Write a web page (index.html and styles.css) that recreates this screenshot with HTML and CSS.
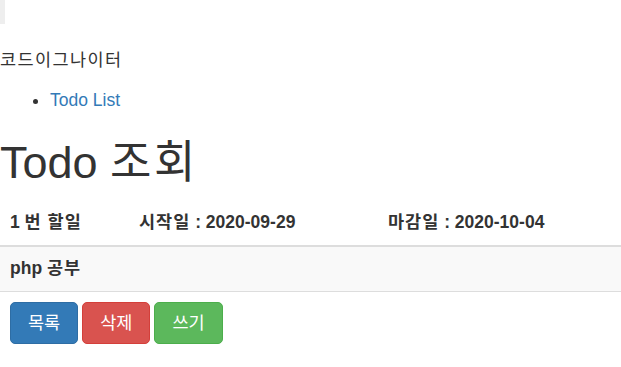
FILE: index.html
```html
<!DOCTYPE html>
<html lang="ko">
<head>
<meta charset="utf-8">
<title>Todo 조회</title>
<link rel="stylesheet" href="styles.css">
</head>
<body>
<div class="topbox"></div>
<div class="brand"><span class="ko">코드이그나이터</span></div>
<ul class="nav-list">
  <li><a href="#">Todo List</a></li>
</ul>
<h1 class="title">Todo <span class="ko-lg">조회</span></h1>
<table class="table">
  <thead>
    <tr>
      <th class="c1">1 <span class="ko-b">번 할일</span></th>
      <th class="c2"><span class="ko-b">시작일</span> : 2020-09-29</th>
      <th class="c3"><span class="ko-b">마감일</span> : 2020-10-04</th>
    </tr>
  </thead>
  <tbody>
    <tr class="striped">
      <th colspan="3">php <span class="ko-b">공부</span></th>
    </tr>
  </tbody>
</table>
<div class="actions">
  <a href="#" class="btn btn-primary">목록</a>
  <a href="#" class="btn btn-danger">삭제</a>
  <a href="#" class="btn btn-success">쓰기</a>
</div>
</body>
</html>
```
FILE: styles.css
```css
html, body {
  margin: 0;
  padding: 0;
  background: #fff;
}
body {
  font-family: "Liberation Sans", Arial, "Noto Sans CJK KR", sans-serif;
  font-size: 17.5px;
  line-height: 25px;
  color: #333;
}
.ko {
  letter-spacing: 1.4px;
}
.ko-b {
  letter-spacing: 1px;
}
.ko-lg {
  letter-spacing: 2.5px;
}
.topbox {
  width: 5px;
  height: 24px;
  background: #eeeeee;
}
.brand {
  margin-top: 24px;
}
.nav-list {
  margin: 15px 0 12.5px;
  padding-left: 50px;
}
.nav-list a {
  color: #337ab7;
  text-decoration: none;
}
.title {
  font-size: 45px;
  line-height: 49.5px;
  font-weight: 400;
  margin: 25px 0 12.5px;
}
.table {
  width: 100%;
  border-collapse: collapse;
  border-spacing: 0;
  margin-bottom: 10px;
}
.table th {
  text-align: left;
  font-weight: bold;
  padding: 10px;
  line-height: 25px;
}
.table thead th {
  border-bottom: 2px solid #ddd;
}
.table .c1 { width: 109px; }
.table .c2 { width: 229px; }
.table tbody th {
  background: #f9f9f9;
  border-bottom: 1px solid #ddd;
  padding-top: 9px;
  padding-bottom: 10px;
}
.actions {
  display: flex;
  gap: 4px;
  padding-left: 10px;
}
.btn {
  display: inline-block;
  padding: 7.5px 17px;
  font-size: 17.5px;
  line-height: 25px;
  border: 1.25px solid transparent;
  border-radius: 5px;
  color: #fff;
  text-decoration: none;
}
.btn-primary { background: #337ab7; border-color: #2e6da4; }
.btn-danger { background: #d9534f; border-color: #d43f3a; }
.btn-success { background: #5cb85c; border-color: #4cae4c; }
```
